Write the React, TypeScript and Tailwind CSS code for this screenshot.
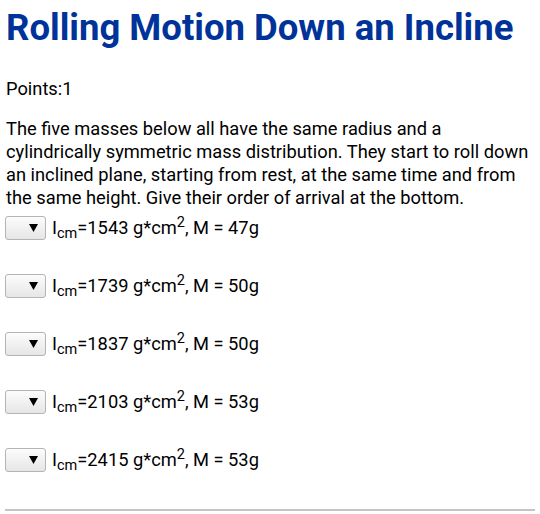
import React from 'react';

const items = [
  { i: '1543', m: '47' },
  { i: '1739', m: '50' },
  { i: '1837', m: '50' },
  { i: '2103', m: '53' },
  { i: '2415', m: '53' },
];

function Dropdown() {
  return (
    <div className="flex h-[24px] w-[41px] shrink-0 items-center justify-end rounded-[3px] border border-[#b4b4b4] bg-gradient-to-b from-[#fcfcfc] to-[#e6e6e6] pr-[7px]">
      <svg width="9" height="8" viewBox="0 0 9 8">
        <path d="M0 0h9L4.5 8z" fill="#000" />
      </svg>
    </div>
  );
}

export default function App() {
  return (
    <div className="bg-white px-[5px] text-black" style={{ fontFamily: 'Roboto, "Liberation Sans", sans-serif' }}>
      <h1 className="pl-[1px] pt-[7px] text-[36.5px] font-bold leading-[42px] text-[#003399]">
        Rolling Motion Down an Incline
      </h1>
      <p className="mt-[28px] pl-[1px] text-[18.3px] leading-[23px]">Points:1</p>
      <p className="mt-[17px] pl-[1px] text-[18.3px] leading-[23px]">
        The five masses below all have the same radius and a cylindrically symmetric mass distribution. They start to
        roll down an inclined plane, starting from rest, at the same time and from the same height. Give their order of
        arrival at the bottom.
      </p>
      <div className="mt-[7px] flex flex-col gap-[34px]">
        {items.map((it) => (
          <div key={it.i} className="flex items-center gap-[6px] text-[18.3px] leading-[24px]">
            <Dropdown />
            <span>
              I<sub className="text-[14.5px]">cm</sub>={it.i} g*cm<sup className="text-[14.5px]">2</sup>, M = {it.m}g
            </span>
          </div>
        ))}
      </div>
      <div className="mt-[37px] h-[2px] bg-[#c4c4c4]" />
    </div>
  );
}
